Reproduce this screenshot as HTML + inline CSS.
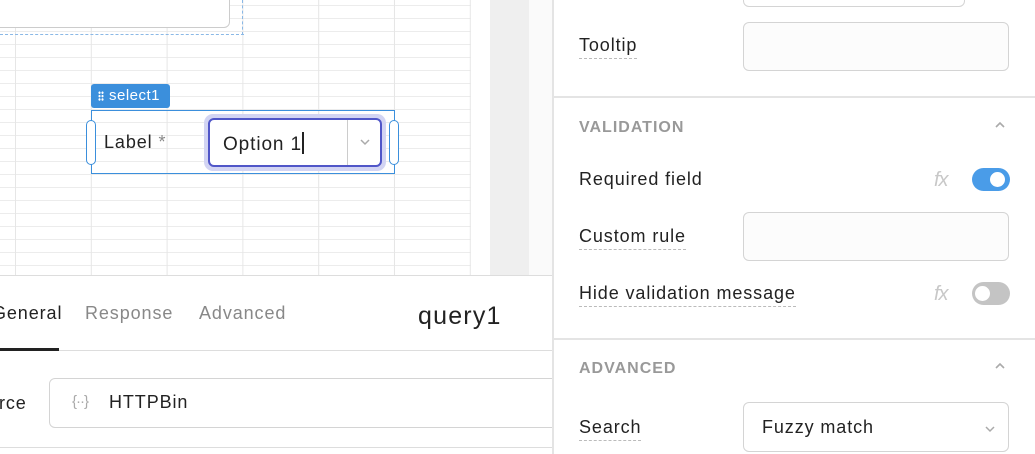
<!DOCTYPE html>
<html><head><style>
*{box-sizing:border-box;margin:0;padding:0}
body{width:1035px;height:454px;overflow:hidden;position:relative;background:#fff;font-family:"Liberation Sans",sans-serif;color:#222}
.a{position:absolute}
.grid{left:0;top:0;width:471px;height:276px;background-color:#fff;
background-image:linear-gradient(to right,#e6e6e6 1px,transparent 1px),linear-gradient(to bottom,#ececec 1px,transparent 1px);
background-size:75.8px 100%,100% 13px;background-position:15px 0,0 5px}
.lbl{font-size:18px;color:#222;letter-spacing:0.9px}
.dash{border-bottom:1.5px dashed #bbb;padding-bottom:2px}
.inp{border:1px solid #d4d4d4;border-radius:6px;background:#fcfcfc}
.sec{font-size:16px;font-weight:bold;color:#999;letter-spacing:1px}
.fx{font-family:"Liberation Sans",sans-serif;font-style:italic;font-size:20px;color:#c8c8c8;letter-spacing:-1px}
</style></head><body>
<div class="a grid"></div>
<div class="a" style="left:-10px;top:-10px;width:240px;height:38px;border:1px solid #ccc;border-radius:6px;background:#fff"></div>
<div class="a" style="left:0;top:33px;width:244px;height:2px;border-bottom:1.5px dashed #8ab8e6"></div>
<div class="a" style="left:242px;top:0;height:35px;border-left:1.5px dashed #8ab8e6"></div>
<div class="a" style="left:490px;top:0;width:39px;height:276px;background:#efefef"></div>
<div class="a" style="left:529px;top:0;width:23px;height:276px;background:#fafafa"></div>
<div class="a" style="left:91px;top:84px;width:79px;height:24px;background:#3b8fdc;border-radius:3px;color:#fff;font-size:15px;line-height:24px;padding-left:18px;letter-spacing:0.5px">select1</div>
<div class="a" style="left:98px;top:91px;width:6px;height:10px;background-image:radial-gradient(circle,#fff 1px,transparent 1.3px);background-size:3px 3.4px"></div>
<div class="a" style="left:91px;top:110px;width:304px;height:64px;border:1.5px solid #3b8fdc"></div>
<div class="a" style="left:86px;top:120px;width:10px;height:45px;border:1.5px solid #3b8fdc;border-radius:5px;background:#fff"></div>
<div class="a" style="left:389px;top:120px;width:10px;height:45px;border:1.5px solid #3b8fdc;border-radius:5px;background:#fff"></div>
<div class="a lbl" style="left:104px;top:132px">Label <span style="color:#888">*</span></div>
<div class="a" style="left:204px;top:114px;width:182px;height:57px;border-radius:9px;background:#d2d4f3"></div>
<div class="a" style="left:208px;top:118px;width:174px;height:49px;border:2px solid #5056c8;border-radius:6px;background:#fff"></div>
<div class="a lbl" style="left:223px;top:132px;font-size:19px">Option 1<span style="display:inline-block;width:1.5px;height:22px;background:#222;vertical-align:-4px"></span></div>
<div class="a" style="left:347px;top:120px;height:45px;border-left:1px solid #ccc"></div>
<svg class="a" style="left:359px;top:138px" width="12" height="8"><path d="M2 2l4 4 4-4" stroke="#aaa" stroke-width="1.5" fill="none"/></svg>
<div class="a" style="left:0;top:275px;width:552px;height:179px;background:#fff;border-top:1px solid #ddd"></div>
<div class="a lbl" style="left:-8px;top:303px">General</div>
<div class="a lbl" style="left:85px;top:303px;color:#888">Response</div>
<div class="a lbl" style="left:199px;top:303px;color:#888">Advanced</div>
<div class="a" style="left:418px;top:302px;font-size:25px;color:#222;letter-spacing:1.2px">query1</div>
<div class="a" style="left:0;top:350px;width:552px;border-top:1px solid #ddd"></div>
<div class="a" style="left:0;top:348px;width:59px;height:3px;background:#222"></div>
<div class="a" style="left:49px;top:378px;width:520px;height:50px;border:1px solid #d4d4d4;border-radius:6px;background:#fff"></div>
<div class="a" style="left:72px;top:393px;font-size:15px;color:#aaa;letter-spacing:-1px">{··}</div>
<div class="a lbl" style="left:109px;top:392px">HTTPBin</div>
<div class="a" style="left:0;top:447px;width:552px;border-top:1px solid #ddd"></div>
<div class="a lbl" style="left:-1px;top:393px">rce</div>
<div class="a" style="left:552px;top:0;width:483px;height:454px;background:#fff;border-left:2px solid #e4e4e4"></div>
<div class="a inp" style="left:743px;top:-10px;width:222px;height:17px;background:#fff"></div>
<div class="a lbl dash" style="left:579px;top:35px">Tooltip</div>
<div class="a inp" style="left:743px;top:22px;width:266px;height:49px"></div>
<div class="a" style="left:553px;top:96px;width:482px;border-top:2px solid #e4e4e4"></div>
<div class="a sec" style="left:579px;top:119px">VALIDATION</div>
<svg class="a" style="left:994px;top:121px" width="12" height="8"><path d="M2 6l4-4 4 4" stroke="#aaa" stroke-width="1.6" fill="none"/></svg>
<div class="a lbl" style="left:579px;top:169px">Required field</div>
<div class="a fx" style="left:934px;top:169px">fx</div>
<div class="a" style="left:972px;top:168px;width:38px;height:23px;border-radius:12px;background:#4a9ce8"></div>
<div class="a" style="left:990px;top:172px;width:15px;height:15px;border-radius:50%;background:#fff"></div>
<div class="a lbl dash" style="left:579px;top:226px">Custom rule</div>
<div class="a inp" style="left:743px;top:212px;width:266px;height:49px"></div>
<div class="a lbl dash" style="left:579px;top:283px">Hide validation message</div>
<div class="a fx" style="left:934px;top:283px">fx</div>
<div class="a" style="left:972px;top:282px;width:38px;height:23px;border-radius:12px;background:#c4c4c4"></div>
<div class="a" style="left:975px;top:286px;width:15px;height:15px;border-radius:50%;background:#fff"></div>
<div class="a" style="left:553px;top:338px;width:482px;border-top:2px solid #e4e4e4"></div>
<div class="a sec" style="left:579px;top:360px">ADVANCED</div>
<svg class="a" style="left:994px;top:362px" width="12" height="8"><path d="M2 6l4-4 4 4" stroke="#aaa" stroke-width="1.6" fill="none"/></svg>
<div class="a lbl dash" style="left:579px;top:417px">Search</div>
<div class="a inp" style="left:743px;top:402px;width:266px;height:50px;background:#fff"></div>
<div class="a lbl" style="left:762px;top:417px">Fuzzy match</div>
<svg class="a" style="left:984px;top:425px" width="12" height="8"><path d="M2 2l4 4 4-4" stroke="#aaa" stroke-width="1.5" fill="none"/></svg>
</body></html>
